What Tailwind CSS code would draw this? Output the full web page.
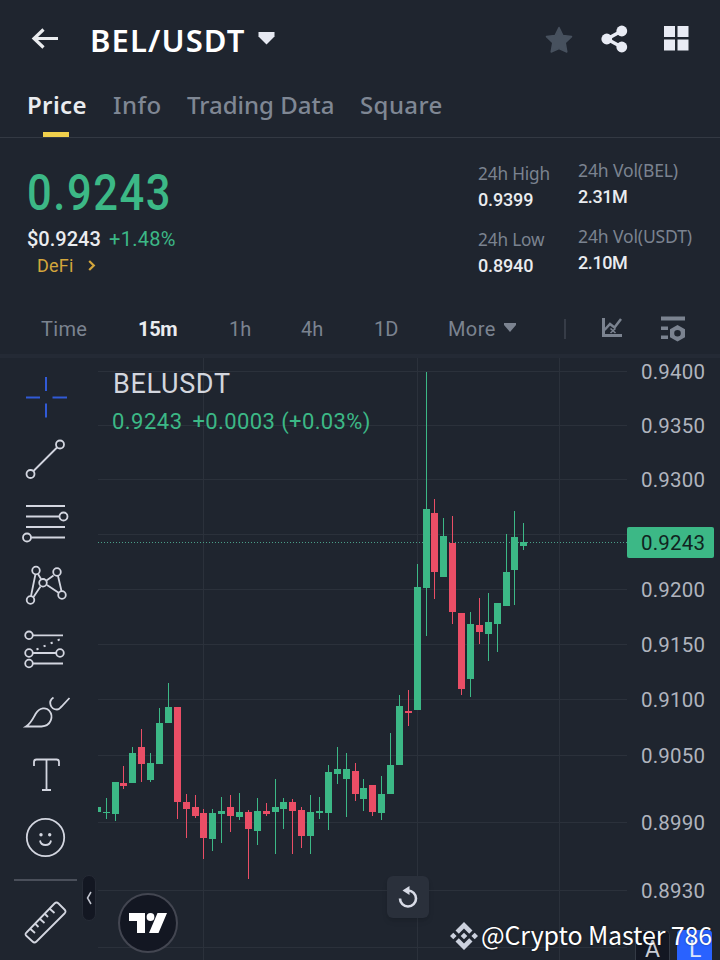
<!DOCTYPE html>
<html lang="en">
<head>
<meta charset="utf-8">
<title>BEL/USDT</title>
<script src="https://cdn.jsdelivr.net/npm/@tailwindcss/browser@4"></script>
</head>
<body class="w-[720px] h-[960px] overflow-hidden bg-[#1f252f] font-['Noto_Sans',sans-serif] text-[#eaecef] whitespace-nowrap">
<div class="relative flex flex-col w-[720px] h-[960px] overflow-hidden">

  <!-- Header -->
  <header class="flex items-center h-20 pl-[31px] pr-[31px] pb-[1px]">
    <svg class="w-[28px] h-[22px] -mt-[1px]" viewBox="0 0 28 22" fill="none" stroke="#eaecef" stroke-width="3.2"><path d="M27 10.5H3M12.5 1.5L3 10.5l9.500 9"/></svg>
    <h1 class="ml-[31px] w-[168px] text-[31px] leading-10 font-semibold tracking-[1.1px] text-white">BEL/USDT</h1>
    <svg class="w-[17px] h-[13px] -mt-[2px]" viewBox="0 0 17 13" fill="#e6e9f2"><path d="M.5 0h16v4.500L8.500 12.500.5 4.500z"/></svg>
    <div class="flex-1"></div>
    <svg class="w-[28px] h-[28px]" viewBox="0 0 28 28" fill="#47515e" stroke="#47515e" stroke-width="1.500" stroke-linejoin="round"><path d="M14 1.500l3.900 8 8.600 1.100-6.300 6.100 1.600 9.300-7.800-3.400L6.200 26l1.600-9.300L1.500 10.600l8.600-1.100z"/></svg>
    <svg class="ml-[28px] w-[27px] h-[28px] -mt-[2px]" viewBox="0 0 27 28" fill="#e8ebf4"><path d="M6 14L20.500 6M6 14l14.500 8" stroke="#e8ebf4" stroke-width="3.600"/><circle cx="5.800" cy="14" r="5.400"/><circle cx="20.800" cy="6" r="5.400"/><circle cx="20.800" cy="22" r="5.400"/></svg>
    <svg class="ml-[36px] w-[25px] h-[25px] -mt-[2px]" viewBox="0 0 25 25" fill="#e8ebf4"><path d="M0 0h11v11H0zM13.500 0h11v11h-11zM0 13.500h11v11H0zM13.500 13.500h11v11h-11z"/></svg>
  </header>

  <!-- Section tabs -->
  <nav class="flex h-[58px] pl-[27px] pt-[8px] border-b border-[#333943] text-[24px] leading-[34px] font-medium text-[#7f8794]">
    <div class="relative w-[86px] text-[#eaecef] font-semibold tracking-[0.35px]">Price<span class="absolute left-[16px] top-[44px] w-[26px] h-[5px] bg-[#f0d04c]"></span></div>
    <div class="w-[74px] tracking-[0.5px]">Info</div>
    <div class="w-[173px] tracking-[0px]">Trading Data</div>
    <div class="tracking-[0.4px]">Square</div>
  </nav>

  <!-- Price summary -->
  <section class="flex h-[162px] pl-[27px]">
    <div class="w-[451px] pt-[24px]">
      <div class="h-[62px] leading-[62px] text-[50px] font-medium tracking-[1.800px] origin-left scale-x-[0.87] text-[#3cb886] font-[Roboto,sans-serif]">0.9243</div>
      <div class="flex h-[30px] leading-[30px] text-[20px] font-[Roboto,sans-serif] font-medium">
        <span class="w-[82px]">$0.9243</span><span class="text-[#3cb886] font-normal tracking-[0.3px]">+1.48%</span>
      </div>
      <div class="flex items-center h-[22px] pl-[10px] text-[18px] text-[#d3a63c] font-[Roboto,sans-serif]">
        <span class="w-[51px] tracking-[0.2px]">DeFi</span>
        <svg class="w-[8px] h-[11px]" viewBox="0 0 8 11" fill="none" stroke="#d3a63c" stroke-width="2.200"><path d="M1.200 1l4.600 4.500L1.200 10"/></svg>
      </div>
    </div>
    <div class="w-[100px] pt-[22px] text-[18px] leading-[26px] tracking-[-0.15px] text-[#7b8390]">
      <div class="origin-left scale-x-[0.955]">24h High</div>
      <div class="relative top-[1px] mb-[14px] text-[#eaecef] font-medium font-[Roboto,sans-serif]">0.9399</div>
      <div class="origin-left scale-x-[0.955]">24h Low</div>
      <div class="relative top-[1px] text-[#eaecef] font-medium font-[Roboto,sans-serif]">0.8940</div>
    </div>
    <div class="pt-[19px] text-[18px] leading-[26px] tracking-[-0.15px] text-[#7b8390]">
      <div class="origin-left scale-x-[0.975]">24h Vol(BEL)</div>
      <div class="relative top-[1px] mb-[14px] text-[#eaecef] font-medium tracking-[-0.4px] font-[Roboto,sans-serif]">2.31M</div>
      <div class="origin-left scale-x-[0.975]">24h Vol(USDT)</div>
      <div class="relative top-[1px] text-[#eaecef] font-medium tracking-[-0.4px] font-[Roboto,sans-serif]">2.10M</div>
    </div>
  </section>

  <!-- Interval bar -->
  <nav class="flex items-center h-[54px] pt-[3px] pl-[41px] text-[20px] text-[#7b8390] font-[Roboto,sans-serif]">
    <span class="w-[97px] tracking-[0.3px]">Time</span>
    <span class="w-[91px] font-bold tracking-[-0.3px] text-[#eaecef]">15m</span>
    <span class="w-[72px]">1h</span>
    <span class="w-[73px]">4h</span>
    <span class="w-[74px]">1D</span>
    <span class="w-[56px] tracking-[0.4px]">More</span>
    <svg class="w-[12px] h-[9px] -mt-[2px]" viewBox="0 0 12 9" fill="#7b8390"><path d="M0 0h12v2L6 9 0 2z"/></svg>
    <span class="ml-[48px] w-[2px] h-[20px] bg-[#363c47]"></span>
    <svg class="ml-[36px] w-[21px] h-[21px] -mt-[3px]" viewBox="0 0 21 21" fill="none" stroke="#7b8390" stroke-width="3"><path d="M1.500 1v17.500H20"/><path d="M2.500 13l5.500-6 4.500 3.500L19 2" stroke-width="2.500"/><path d="M8.500 11.500l5 4.500M13.500 11.500l-5 4.500" stroke-width="1.600"/></svg>
    <svg class="ml-[37px] w-[26px] h-[26px]" viewBox="0 0 26 26" fill="#7b8390"><path d="M1 .5h24v4H1zM1 10.500h7v3.500H1zM1 19.500h7V23H1z"/><path fill-rule="evenodd" d="M17.500 9l7.500 4.200v8L17.500 25.500 10 21.200v-8zM17.500 14a3.300 3.300 0 1 0 0 6.600 3.300 3.300 0 0 0 0-6.600z"/></svg>
  </nav>

  <!-- Chart -->
  <main class="relative flex h-[606px] border-t-4 border-[#242a35]">
    <aside class="w-[98px] h-[602px] shrink-0">
      <svg class="w-[98px] h-[602px]" viewBox="0 358 98 602" fill="none" stroke="#d3d6e0" stroke-width="1.800">
        <path d="M46 377v14M46 403.500v14M26 397.500h14M52.500 397.500H67" stroke="#315ad6" stroke-width="2"/>
        <path d="M33.500 471L57 447.500"/><circle cx="30.500" cy="474" r="4"/><circle cx="60" cy="444.500" r="4"/>
        <path d="M26 506h39M26 516.500h33M26 527h39M31 537.500h34"/><circle cx="63.500" cy="516.500" r="4"/><circle cx="27" cy="537.500" r="4"/>
        <path d="M31 596l4.500-22M38 574l3 5M46.500 580.500l7-5M33.500 597l7-10.500M47 585l12 8M58 576l3.500 15"/><circle cx="36" cy="570.500" r="3.800"/><circle cx="57" cy="572" r="3.800"/><circle cx="43" cy="582.800" r="3.800"/><circle cx="30.500" cy="600" r="3.800"/><circle cx="62" cy="595" r="3.800"/>
        <path d="M33 635.300h30M33 653h23M33 663.500h30"/><circle cx="29" cy="635.300" r="3.800"/><circle cx="29" cy="653" r="3.800"/><circle cx="60" cy="653" r="3.800"/><circle cx="29" cy="663.500" r="3.800"/><path d="M36.500 649.500L63 638" stroke-width="2" stroke-dasharray="2.200 5.500"/>
        <path d="M26 726.500c5-3 7-8 9.500-12.500 4-7 11-7 14-3 4 5 2 15-8 15.500zM53.500 697.500c-6 4-3 12 3.500 12 2 0 3-1.500 4.500-3l8-8.500"/>
        <path d="M34 766v-4q0-2.500 2.500-2.500h20q2.500 0 2.500 2.500v4M46.500 760v30M42 790h9"/>
        <circle cx="45.500" cy="837.500" r="18.700"/><path d="M40 840.500c1 6 10 6 11 0"/><circle cx="41" cy="834.700" r="1.700" fill="#d3d6e0" stroke="none"/><circle cx="49.700" cy="834.700" r="1.700" fill="#d3d6e0" stroke="none"/>
        <path d="M14 880h63" stroke="#4a4f5a"/>
        <path d="M26.500 932.500L54.500 903.500q2-2 4 0l6 6q2 2 0 4L36.500 941.500q-2 2-4 0l-6-5.500q-2-1.800 0-3.500zM30.500 929l4.500 4M35.500 924l3 3M40 919l4.500 4M45 914l3 3M50 909l4.500 4"/>
      </svg>
    </aside>
    <svg id="chart" class="w-[622px] h-[602px] font-[Roboto,sans-serif]" viewBox="98 358 622 602">
      <path d="M98 371.500H627M98 425.500H627M98 479.500H627M98 534.500H627M98 589.500H627M98 644.500H627M98 699.500H627M98 755.500H627M98 822.500H627M98 890.500H627M98 947.500H627M203.500 358V960M417.500 358V960M559.500 358V960" stroke="#2b313b" fill="none"/>
      <path d="M98 542.500H627" stroke="#4a9f89" stroke-dasharray="1 2"/>
      <g id="candles" shape-rendering="crispEdges"></g>
      <text x="113" y="393" font-size="27" fill="#d3d6de" textLength="117">BELUSDT</text>
      <g font-size="22" fill="#3cb886"><text x="112" y="429" textLength="70">0.9243</text><text x="192.500" y="429" textLength="178">+0.0003 (+0.03%)</text></g>
      <rect x="627" y="527" width="87" height="31" rx="2" fill="#3cb886"/>
      <g font-size="20.500" fill="#b0b4be">
        <text x="641" y="379" textLength="64">0.9400</text>
        <text x="641" y="433" textLength="64">0.9350</text>
        <text x="641" y="487" textLength="64">0.9300</text>
        <text x="641" y="550" textLength="64" fill="#10241f">0.9243</text>
        <text x="641" y="597" textLength="64">0.9200</text>
        <text x="641" y="652" textLength="64">0.9150</text>
        <text x="641" y="707" textLength="64">0.9100</text>
        <text x="641" y="763" textLength="64">0.9050</text>
        <text x="641" y="830" textLength="64">0.8990</text>
        <text x="641" y="898" textLength="64">0.8930</text>
      </g>
      <rect x="635.500" y="930.500" width="34" height="40" rx="4" fill="#131722" stroke="#343a45"/>
      <rect x="677" y="930" width="35" height="40" rx="4" fill="#2962ff"/>
      <text x="645" y="957" font-size="23" fill="#c9ccd5">A</text>
      <text x="689" y="957" font-size="23" fill="#dbe3fb">L</text>
    </svg>

    <!-- Controls floating over the chart -->
    <div class="absolute left-[82px] top-[517px] w-[14px] h-[46px] rounded-[7px] bg-[#131722] border border-[#262b36] flex items-center justify-center">
      <svg class="w-[6px] h-[14px]" viewBox="0 0 6 14" fill="none" stroke="#c3c6d0" stroke-width="1.500"><path d="M5 1L1.500 7 5 13"/></svg>
    </div>
    <div class="absolute left-[118px] top-[535px] w-[60px] h-[60px] rounded-full bg-[#131722] border-2 border-[#434651] flex items-center justify-center">
      <svg class="w-[38px] h-[20px]" viewBox="0 0 38 20" fill="#fff"><path d="M0 0h16v20H8V8H0zM28.500 0H38l-8.500 20h-9.500z"/><circle cx="21.500" cy="4" r="3.900"/></svg>
    </div>
    <div class="absolute left-[387px] top-[518px] w-[42px] h-[42px] rounded-[6px] bg-[#2a303b] shadow-md flex items-center justify-center">
      <svg class="w-[20px] h-[22px]" viewBox="0 0 20 22" fill="none" stroke="#d8dbe6" stroke-width="2.600"><path d="M2 12.500a8 8 0 1 0 8-8H9"/><path d="M4.500 4.500l7-4.500v9z" fill="#d8dbe6" stroke="none"/></svg>
    </div>
  </main>

  <!-- Author mark -->
  <div class="absolute left-[450px] top-[917px] flex items-center h-[38px] text-white">
    <svg class="w-[28px] h-[28px]" viewBox="0 0 28 28" fill="#ccd1de"><path d="M14 0l8.500 8.500-3.300 3.300L14 6.600l-5.200 5.200-3.300-3.300zM14 28l8.500-8.500-3.300-3.300L14 21.400l-5.200-5.200-3.300 3.300zM14 10.700l3.300 3.300-3.300 3.300-3.300-3.300zM3.300 10.700L6.600 14l-3.300 3.300L0 14zM24.700 10.700L28 14l-3.300 3.300-3.300-3.300z"/></svg>
    <span class="ml-[3px] text-[25px] tracking-[-0.12px] -mt-[2px] font-['Noto_Sans_CJK_SC',sans-serif] [text-shadow:0_0_2px_rgba(0,0,0,0.5)]">@Crypto Master 786</span>
  </div>
</div>
<script>
// [centre x, high y, low y, body top y, body bottom y, rising]
const candles = [
[106.5,798,819,812,813,1],[115.5,782,821,782,814,1],[123.5,766,789,783,786,0],[132.5,747,783,753,783,1],[141.5,729,782,747,764,0],
[150.5,753,782,763,780,1],[159.5,708,764,723,764,1],[168.5,683,723,707,723,1],[177.5,707,819,707,802,0],[186.5,794,838,802,809,0],
[195.5,795,818,807,816,0],[203.5,809,859,813,838,0],[212.5,809,851,813,839,1],[221.5,797,843,811,814,1],[230.5,795,832,807,816,0],
[239.5,793,820,812,817,1],[248.5,810,879,812,829,0],[257.5,798,845,811,831,1],[266.5,803,816,811,814,0],[275.5,779,854,807,812,1],
[283.5,798,829,802,809,1],[292.5,799,854,802,811,0],[301.5,807,848,810,836,0],[310.5,795,854,812,836,1],[319.5,797,819,811,813,1],
[328.5,765,830,772,813,1],[337.5,747,784,769,774,1],[346.5,753,817,769,779,1],[355.5,763,801,771,794,0],[363.5,779,811,788,799,1],
[372.5,785,816,785,812,0],[381.5,776,820,794,813,1],[390.5,733,794,765,794,1],[399.5,695,765,706,765,1],[408.5,690,726,711,713,0],
[417.5,564,710,587,710,1],[426.5,372,636,509,588,1],[434.5,499,599,513,572,0],[443.5,518,577,536,577,1],[452.5,516,624,543,612,0],
[461.5,613,695,613,689,0],[470.5,612,697,624,679,1],[479.5,598,644,625,632,0],[488.5,593,661,622,634,1],[497.5,603,652,603,624,1],
[506.5,534,606,572,606,1],[514.5,511,605,537,570,1],[523.5,523,550,542,546,1]];
let out = '<rect x="98" y="807" width="3" height="5" fill="#3cb886"/>';
for (const [x, hi, lo, top, bot, up] of candles) {
  const c = up ? '#3cb886' : '#ea4e66';
  out += `<rect x="${x - 0.5}" y="${hi}" width="1" height="${lo - hi}" fill="${c}"/><rect x="${x - 3.5}" y="${top}" width="7" height="${bot - top}" fill="${c}"/>`;
}
document.getElementById('candles').innerHTML = out;
</script>
</body>
</html>
